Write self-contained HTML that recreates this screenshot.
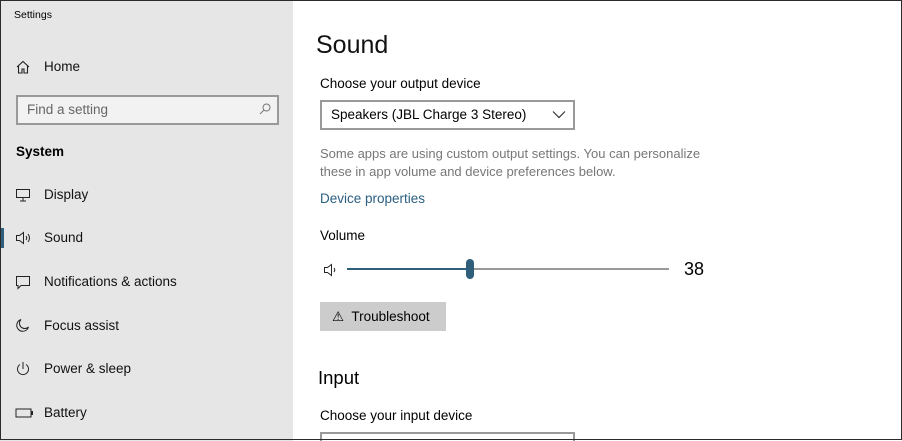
<!DOCTYPE html>
<html><head><style>
body{margin:0;width:902px;height:441px;overflow:hidden;font-family:"Liberation Sans",sans-serif;background:#fff;}
.win{position:absolute;left:0;top:0;width:902px;height:441px;background:#fff;overflow:hidden}
.frame{position:absolute;left:0;top:0;width:902px;height:440px;border:1px solid #2b2b2b;box-sizing:border-box;pointer-events:none}
.side{position:absolute;left:0;top:0;width:293px;height:441px;background:#e6e6e6}
.t{position:absolute;white-space:nowrap;color:#000}
.nav{position:absolute;left:44px;font-size:13.5px;color:#111}
.ico{position:absolute;left:15px}
</style></head><body><div class="win">
<div class="side">
<div class="t" style="left:14px;top:9px;font-size:10.5px">Settings</div>
<svg class="ico" style="top:60px" width="16" height="14" viewBox="0 0 16 14"><path d="M2 7L8 1.5 14 7M3.5 6v7h3.5V9h2v4h3.5V6" fill="none" stroke="#222" stroke-width="1.1"/></svg>
<div class="nav" style="top:59px;">Home</div>
<div style="position:absolute;left:16px;top:95px;width:263px;height:30px;border:2px solid #999;background:#f2f2f2;box-sizing:border-box"></div>
<div class="t" style="left:27px;top:102px;font-size:13.5px;color:#666">Find a setting</div>
<svg style="position:absolute;left:258px;top:102px" width="14" height="14"><circle cx="8.5" cy="5.5" r="3.5" fill="none" stroke="#777"/><path d="M6 8L2 12" stroke="#777"/></svg>
<div class="t" style="left:16px;top:144px;font-size:13.5px;font-weight:bold">System</div>
<svg class="ico" style="top:188px" width="16" height="14"><rect x="1.5" y="1.5" width="13" height="8" fill="none" stroke="#222"/><path d="M8 10v3M5 13h6" stroke="#222"/></svg>
<div class="nav" style="top:187px">Display</div>
<div style="position:absolute;left:0;top:228px;width:4px;height:20px;background:#2f5f7a"></div>
<svg class="ico" style="top:231px" width="18" height="14"><path d="M1.5 4.5h3l4-3v11l-4-3h-3z" fill="none" stroke="#222"/><path d="M11 5q1.5 2 0 4M13 3q3 4 0 8" fill="none" stroke="#222"/></svg>
<div class="nav" style="top:230px">Sound</div>
<svg class="ico" style="top:275px" width="16" height="15"><path d="M1.5 1.5h13v9H6l-3 3v-3H1.5z" fill="none" stroke="#222"/></svg>
<div class="nav" style="top:274px">Notifications &amp; actions</div>
<svg class="ico" style="top:318px" width="16" height="15"><path d="M6 1.5A6 6 0 1 0 13.5 9 5 5 0 0 1 6 1.5z" fill="none" stroke="#222"/></svg>
<div class="nav" style="top:318px">Focus assist</div>
<svg class="ico" style="top:361px" width="16" height="16"><path d="M5 3.5A5.5 5.5 0 1 0 11 3.5M8 1v7" fill="none" stroke="#222"/></svg>
<div class="nav" style="top:361px">Power &amp; sleep</div>
<svg class="ico" style="top:408px" width="20" height="10"><rect x="1" y="1" width="15" height="8" fill="none" stroke="#222"/><rect x="16" y="3" width="2" height="4" fill="#222"/></svg>
<div class="nav" style="top:405px">Battery</div>
</div>
<div class="t" style="left:316px;top:31px;font-size:25px;color:#111">Sound</div>
<div class="t" style="left:320px;top:76px;font-size:13.5px">Choose your output device</div>
<div style="position:absolute;left:320px;top:100px;width:255px;height:30px;border:2px solid #999;box-sizing:border-box"></div>
<div class="t" style="left:331px;top:107px;font-size:13.5px">Speakers (JBL Charge 3 Stereo)</div>
<svg style="position:absolute;left:552px;top:110px" width="14" height="9"><path d="M1 1.5l6 6 6-6" fill="none" stroke="#333" stroke-width="1.2"/></svg>
<div class="t" style="left:320px;top:145px;font-size:13px;color:#777;line-height:18px">Some apps are using custom output settings. You can personalize<br>these in app volume and device preferences below.</div>
<div class="t" style="left:320px;top:191px;font-size:13.5px;color:#2b5f82">Device properties</div>
<div class="t" style="left:320px;top:228px;font-size:13.5px">Volume</div>
<svg style="position:absolute;left:323px;top:263px" width="18" height="14"><path d="M1.5 4.5h3l4-3v11l-4-3h-3z" fill="none" stroke="#222"/><path d="M11 5q1.5 2 0 4" fill="none" stroke="#222"/></svg>
<div style="position:absolute;left:347px;top:268px;width:123px;height:2px;background:#2f5f7a"></div>
<div style="position:absolute;left:470px;top:268px;width:199px;height:2px;background:#999"></div>
<div style="position:absolute;left:466px;top:259px;width:8px;height:20px;border-radius:4px;background:#2f5f7a"></div>
<div class="t" style="left:684px;top:259px;font-size:18px">38</div>
<div style="position:absolute;left:320px;top:302px;width:126px;height:29px;background:#ccc"></div>
<div class="t" style="left:332px;top:309px;font-size:13.5px">⚠&nbsp; Troubleshoot</div>
<div class="t" style="left:318px;top:367px;font-size:18.5px">Input</div>
<div class="t" style="left:320px;top:408px;font-size:13.5px">Choose your input device</div>
<div style="position:absolute;left:320px;top:432px;width:255px;height:30px;border:2px solid #999;box-sizing:border-box"></div>
<div class="frame"></div>
</div></body></html>
